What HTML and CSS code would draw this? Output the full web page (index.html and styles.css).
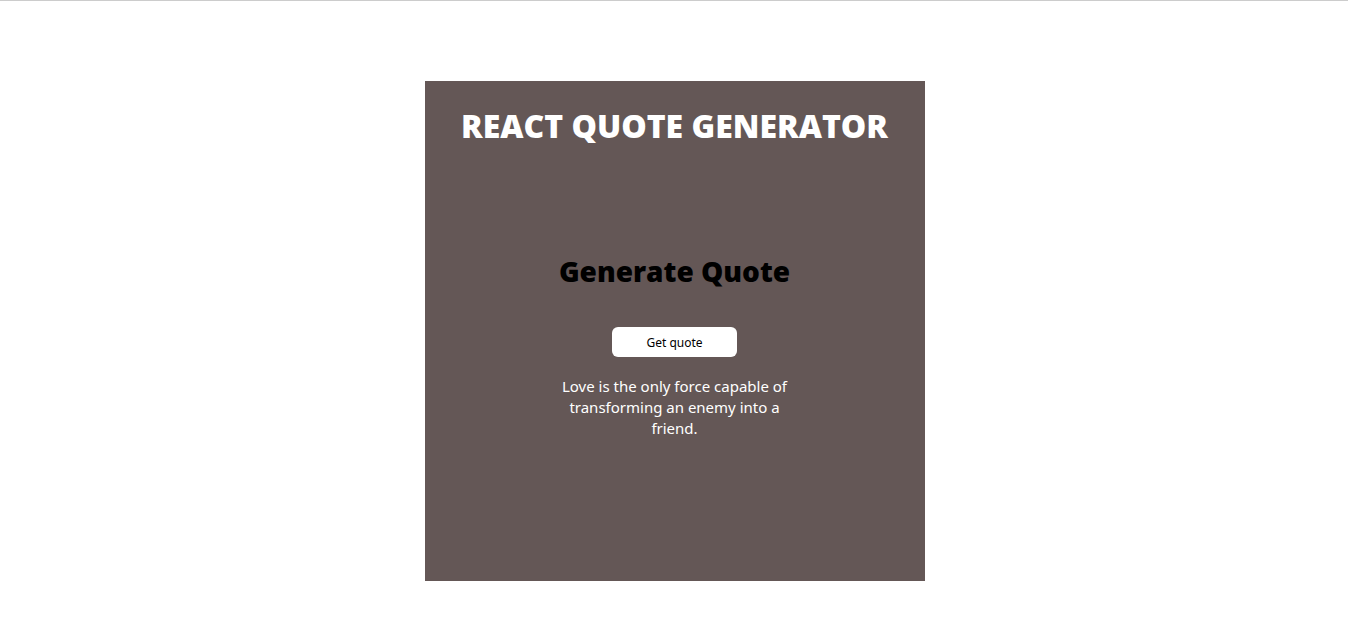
FILE: index.html
```html
<!DOCTYPE html>
<html lang="en">
<head>
<meta charset="utf-8">
<title>React Quote Generator</title>
<link rel="stylesheet" href="styles.css">
</head>
<body>
<div class="topline"></div>
<main class="page">
  <section class="card">
    <h1 class="app-title">REACT QUOTE GENERATOR</h1>
    <div class="quote-box">
      <h2 class="quote-heading">Generate Quote</h2>
      <button class="quote-btn" type="button">Get quote</button>
      <p class="quote-text">Love is the only force capable of transforming an enemy into a friend.</p>
    </div>
  </section>
</main>
</body>
</html>
```
FILE: styles.css
```css
* { box-sizing: border-box; }

html, body {
  margin: 0;
  padding: 0;
  background: #ffffff;
  font-family: "Noto Sans", "Open Sans", sans-serif;
}

.topline {
  height: 1px;
  background: #cccccc;
}

.page {
  display: flex;
  justify-content: center;
  padding-top: 80px;
}

.card {
  width: 500px;
  height: 500px;
  margin-left: 1px;
  background: #645756;
  display: flex;
  flex-direction: column;
  align-items: center;
}

.app-title {
  margin: 24px 0 0;
  font-family: "Open Sans", "Noto Sans", sans-serif;
  font-size: 32px;
  font-weight: 800;
  color: #ffffff;
  line-height: 42px;
}

.quote-box {
  display: flex;
  flex-direction: column;
  align-items: center;
  margin-top: 106px;
}

.quote-heading {
  margin: 0;
  font-family: "Open Sans", "Noto Sans", sans-serif;
  font-size: 28px;
  font-weight: 800;
  color: #000000;
  line-height: 36px;
}

.quote-btn {
  margin-top: 38px;
  width: 125px;
  height: 30px;
  border: none;
  border-radius: 6px;
  background: #ffffff;
  color: #000000;
  font-family: "Noto Sans", "Open Sans", sans-serif;
  font-size: 12px;
  cursor: pointer;
}

.quote-text {
  margin: 19px 0 0;
  width: 240px;
  text-align: center;
  font-size: 15px;
  line-height: 21px;
  color: #ffffff;
}
```
